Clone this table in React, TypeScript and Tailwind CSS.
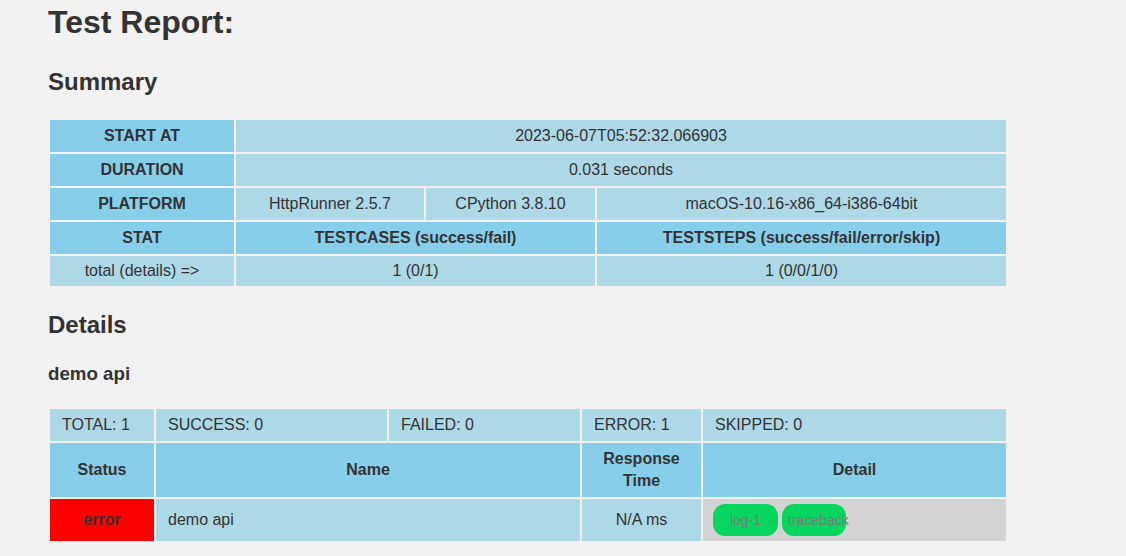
import React from "react";

const th = "bg-[#87ceeb] font-bold text-center";
const td = "bg-[#add8e6] text-center";

export default function App() {
    return (
        <div className="min-h-screen bg-[#f2f2f2] text-[#333] pl-[48px] pt-[4px] text-[16px] font-['Liberation_Sans',Arial,sans-serif]">
            <h1 className="text-[32px] font-bold leading-[36px]">Test Report:</h1>

            {/* Summary */}
            <h2 className="mt-[28px] text-[24px] font-bold leading-[28px]">Summary</h2>
            <table className="mt-[22px] w-[960px] table-fixed border-separate border-spacing-[2px]">
                <colgroup>
                    <col className="w-[184px]" />
                    <col className="w-[188px]" />
                    <col className="w-[169px]" />
                    <col />
                </colgroup>
                <tbody>
                    <tr className="h-[32px]">
                        <th className={th}>START AT</th>
                        <td className={td} colSpan={3}>2023-06-07T05:52:32.066903</td>
                    </tr>
                    <tr className="h-[32px]">
                        <th className={th}>DURATION</th>
                        <td className={td} colSpan={3}>0.031 seconds</td>
                    </tr>
                    <tr className="h-[32px]">
                        <th className={th}>PLATFORM</th>
                        <td className={td}>HttpRunner 2.5.7</td>
                        <td className={td}>CPython 3.8.10</td>
                        <td className={td}>macOS-10.16-x86_64-i386-64bit</td>
                    </tr>
                    <tr className="h-[32px]">
                        <th className={th}>STAT</th>
                        <th className={th} colSpan={2}>TESTCASES (success/fail)</th>
                        <th className={th}>TESTSTEPS (success/fail/error/skip)</th>
                    </tr>
                    <tr className="h-[30px]">
                        <td className={td}>total (details) =&gt;</td>
                        <td className={td} colSpan={2}>1 (0/1)</td>
                        <td className={td}>1 (0/0/1/0)</td>
                    </tr>
                </tbody>
            </table>

            {/* Details */}
            <h2 className="mt-[23px] text-[24px] font-bold leading-[28px]">Details</h2>
            <h3 className="mt-[24px] text-[18.72px] font-bold leading-[22px]">demo api</h3>
            <table className="mt-[22px] w-[960px] table-fixed border-separate border-spacing-[2px]">
                <colgroup>
                    <col className="w-[104px]" />
                    <col className="w-[231px]" />
                    <col className="w-[191px]" />
                    <col className="w-[119px]" />
                    <col />
                </colgroup>
                <tbody>
                    <tr className="h-[32px]">
                        <td className="bg-[#add8e6] px-[12px]">TOTAL: 1</td>
                        <td className="bg-[#add8e6] px-[12px]">SUCCESS: 0</td>
                        <td className="bg-[#add8e6] px-[12px]">FAILED: 0</td>
                        <td className="bg-[#add8e6] px-[12px]">ERROR: 1</td>
                        <td className="bg-[#add8e6] px-[12px]">SKIPPED: 0</td>
                    </tr>
                    <tr className="h-[54px]">
                        <th className={th}>Status</th>
                        <th className={th} colSpan={2}>Name</th>
                        <th className={`${th} leading-[22px] px-[8px]`}>Response Time</th>
                        <th className={th}>Detail</th>
                    </tr>
                    <tr className="h-[42px]">
                        <td className="bg-[#ff0000] text-center font-bold">error</td>
                        <td className="bg-[#add8e6] px-[12px]" colSpan={2}>demo api</td>
                        <td className={td}>N/A ms</td>
                        <td className="bg-[#d3d3d3] pl-[10px]">
                            <div className="flex gap-[4px]">
                                <button className="w-[65px] h-[32px] rounded-[12px] bg-[#07d65e] px-[6px] text-[14px] text-[#7a7a7a] text-center whitespace-nowrap">log-1</button>
                                <button className="w-[64px] h-[32px] rounded-[12px] bg-[#07d65e] px-[6px] text-[14px] text-[#7a7a7a] text-left whitespace-nowrap">traceback</button>
                            </div>
                        </td>
                    </tr>
                </tbody>
            </table>
        </div>
    );
}
